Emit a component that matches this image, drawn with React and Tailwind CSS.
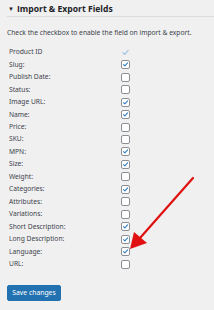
import React from "react";

const rows = [
  ["Slug:", true],
  ["Publish Date:", false],
  ["Status:", false],
  ["Image URL:", true],
  ["Name:", true],
  ["Price:", false],
  ["SKU:", false],
  ["MPN:", true],
  ["Size:", true],
  ["Weight:", false],
  ["Categories:", true],
  ["Attributes:", false],
  ["Variations:", false],
  ["Short Description:", true],
  ["Long Description:", true],
  ["Language:", true],
  ["URL:", false],
];

function Check({ light }) {
  return (
    <svg width="9" height="9" viewBox="0 0 9 9" className="block">
      <path d="M2 4.6 L3.7 6.3 L7.2 2.4" fill="none" stroke={light ? "#a7c6e6" : "#2d7cc0"} strokeWidth="1.3" strokeLinecap="round" strokeLinejoin="round" />
    </svg>
  );
}

function Box({ checked }) {
  return (
    <div className="w-[9px] h-[9px] rounded-[2px] border border-[#8c8f94] bg-white flex items-center justify-center box-border">
      {checked && <Check />}
    </div>
  );
}

export default function App() {
  return (
    <div className="relative w-[214px] h-[310px] bg-[#f0f0f1] overflow-hidden" style={{ fontFamily: '"Noto Sans", "Open Sans", sans-serif' }}>
      <div className="pl-[7px]">
        <div className="flex items-center h-[17px] pt-[2px] border-b border-[#dcdcde]">
          <span className="text-[6px] text-[#1d2327] mr-[3px] ml-[1px] leading-none">▼</span>
          <span className="text-[8.6px] font-bold text-[#1d2327] leading-none" style={{ fontFamily: '"Open Sans", sans-serif' }}>Import &amp; Export Fields</span>
        </div>
        <div className="mt-[11px] text-[6.7px] text-[#3c434a] leading-[10px]">
          Check the checkbox to enable the field on import &amp; export.
        </div>
        <div className="mt-[8px] pl-[2px]">
          <div className="flex items-center h-[12.47px]">
            <span className="w-[112px] text-[6.7px] text-[#3c434a]">Product ID</span>
            <div className="w-[9px] h-[9px] flex items-center justify-center"><Check light /></div>
          </div>
          {rows.map(([label, checked]) => (
            <div key={label} className="flex items-center h-[12.47px]">
              <span className="w-[112px] text-[6.7px] text-[#3c434a]">{label}</span>
              <Box checked={checked} />
            </div>
          ))}
        </div>
        <div className="mt-[15px] flex">
          <button className="block h-[16px] w-[54px] rounded-[2px] bg-[#2271b1] border border-[#2271b1] text-white text-[6.8px] leading-none">
            Save changes
          </button>
        </div>
      </div>
      <svg className="absolute left-0 top-0" width="214" height="310" viewBox="0 0 214 310">
        <line x1="193" y1="178" x2="140" y2="238" stroke="#e01010" strokeWidth="2.2" strokeLinecap="round" />
        <polygon points="130,249 134,232 147,243" fill="#e01010" />
      </svg>
    </div>
  );
}
